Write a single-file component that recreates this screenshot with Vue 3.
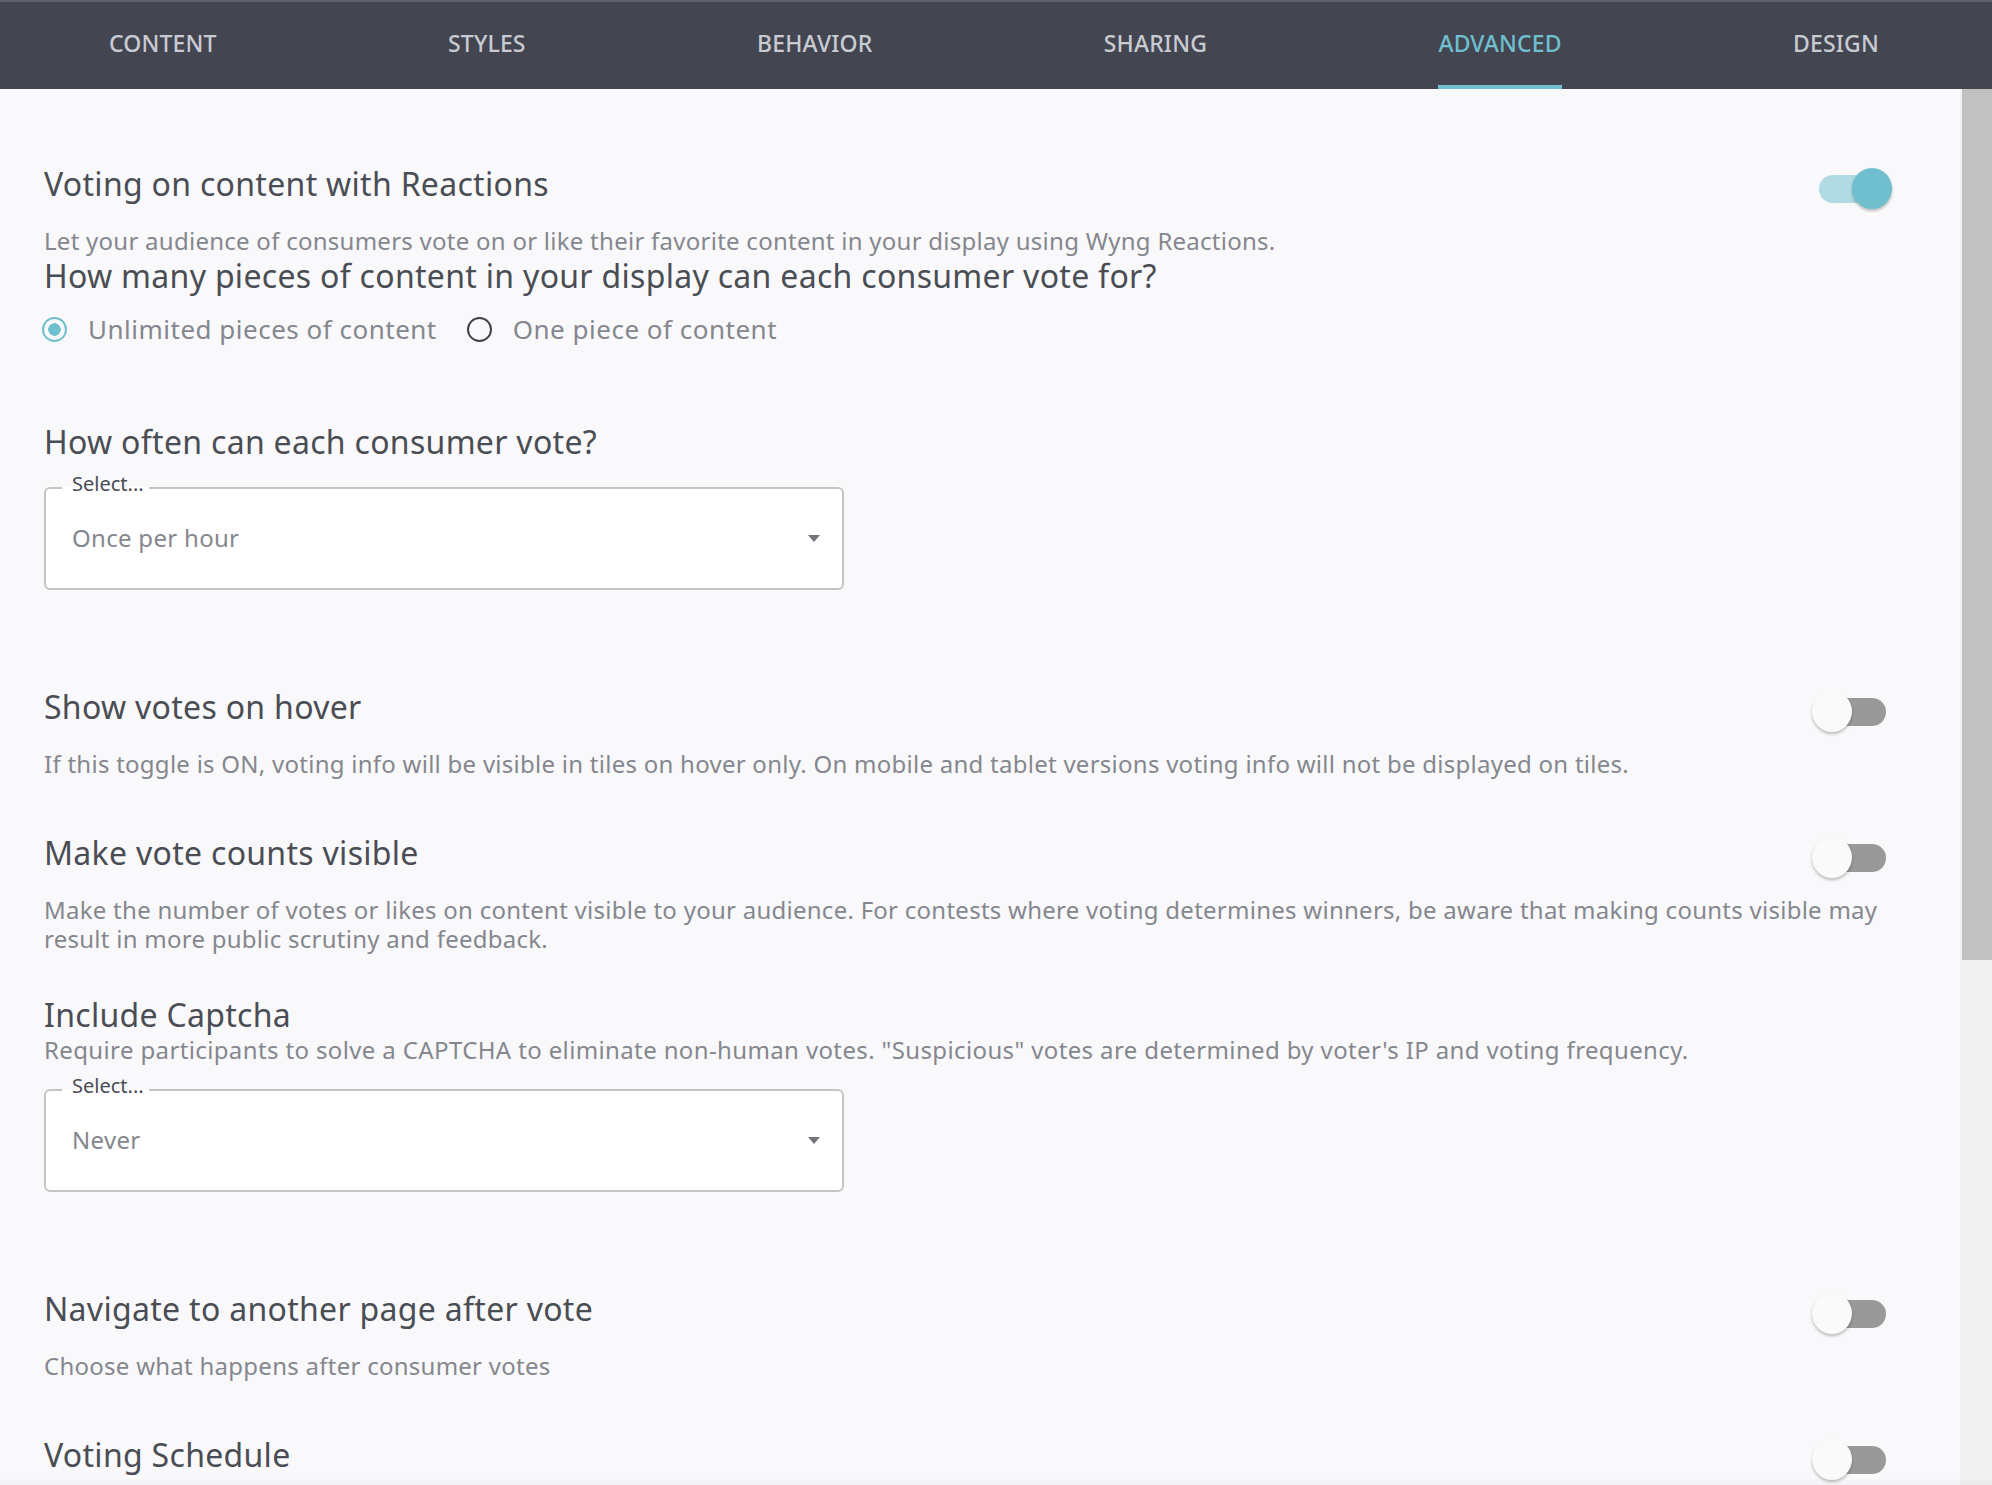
<template>
  <div class="page">
    <nav class="tabs">
      <a v-for="t in tabs" :key="t" class="tab" :class="{ active: t === active }" @click="active = t">{{ t }}</a>
    </nav>

    <div class="body">
      <main class="content">
        <section class="row first">
          <div class="head">
            <h2>Voting on content with Reactions</h2>
            <span class="toggle on"><i></i></span>
          </div>
          <p class="desc d-first">Let your audience of consumers vote on or like their favorite content in your display using Wyng Reactions.</p>
        </section>

        <h2 class="q-many">How many pieces of content in your display can each consumer vote for?</h2>
        <div class="radios">
          <label class="radio"><span class="dot checked"></span>Unlimited pieces of content</label>
          <label class="radio"><span class="dot"></span>One piece of content</label>
        </div>

        <h2 class="q-often">How often can each consumer vote?</h2>
        <fieldset class="select">
          <legend>Select...</legend>
          <span>Once per hour</span>
          <b class="caret"></b>
        </fieldset>

        <section class="row hover-row">
          <div class="head">
            <h2>Show votes on hover</h2>
            <span class="toggle"><i></i></span>
          </div>
          <p class="desc">If this toggle is ON, voting info will be visible in tiles on hover only. On mobile and tablet versions voting info will not be displayed on tiles.</p>
        </section>

        <section class="row counts-row">
          <div class="head">
            <h2>Make vote counts visible</h2>
            <span class="toggle"><i></i></span>
          </div>
          <p class="desc">Make the number of votes or likes on content visible to your audience. For contests where voting determines winners, be aware that making counts visible may result in more public scrutiny and feedback.</p>
        </section>

        <h2 class="q-captcha">Include Captcha</h2>
        <p class="desc d-captcha">Require participants to solve a CAPTCHA to eliminate non-human votes. "Suspicious" votes are determined by voter's IP and voting frequency.</p>
        <fieldset class="select">
          <legend>Select...</legend>
          <span>Never</span>
          <b class="caret"></b>
        </fieldset>

        <section class="row nav-row">
          <div class="head">
            <h2>Navigate to another page after vote</h2>
            <span class="toggle"><i></i></span>
          </div>
          <p class="desc">Choose what happens after consumer votes</p>
        </section>

        <section class="row schedule-row">
          <div class="head">
            <h2>Voting Schedule</h2>
            <span class="toggle"><i></i></span>
          </div>
        </section>
      </main>

      <div class="scrollbar"><div class="thumb"></div></div>
      <div class="fade"></div>
    </div>
  </div>
</template>

<script setup>
import { ref } from 'vue'

const tabs = ['CONTENT', 'STYLES', 'BEHAVIOR', 'SHARING', 'ADVANCED', 'DESIGN']
const active = ref('ADVANCED')
</script>

<style>
html, body { margin: 0; background: #f9f9fb; }
</style>

<style scoped>
.page {
  width: 1992px;
  height: 1485px;
  overflow: hidden;
  font-family: "Noto Sans", sans-serif;
  color: #4a4d54;
  background: #f9f9fb;
}
.tabs {
  height: 89px;
  box-sizing: border-box;
  border-top: 2px solid #5d616b;
  padding: 0 113px 0 109px;
  background: #434650;
  display: flex;
  justify-content: space-between;
}
.tab {
  font-size: 23px;
  font-weight: 500;
  line-height: 83px;
  letter-spacing: 0.15px;
  color: #c9cbd2;
  cursor: pointer;
}
.tab.active {
  color: #6fbfcf;
  box-shadow: inset 0 -4px 0 #6fbfcf;
}
.body {
  position: relative;
  display: flex;
  height: 1396px;
}
.content {
  flex: 1;
  padding: 0 0 0 44px;
  min-width: 0;
}
.scrollbar {
  width: 32px;
  background: #f1f1f1;
  display: flex;
  justify-content: flex-end;
}
.thumb {
  width: 30px;
  height: 871px;
  background: #c1c1c1;
}
.fade {
  position: absolute;
  left: 0;
  right: 0;
  bottom: 0;
  height: 8px;
  background: linear-gradient(rgba(0,0,0,0), rgba(0,0,0,0.03));
  pointer-events: none;
}
h2 {
  margin: 0;
  font-size: 32px;
  line-height: 40px;
  font-weight: 400;
  letter-spacing: 0.3px;
}
.head {
  display: flex;
  justify-content: space-between;
  align-items: center;
  padding-right: 74px;
}
.desc {
  margin: 0;
  font-size: 24px;
  line-height: 29px;
  letter-spacing: 0.26px;
  color: #85878e;
  width: 1860px;
}
.first { margin-top: 75px; }
.d-first { margin-top: 22px; }
.q-many { margin-top: 1px; }
.radios {
  display: flex;
  gap: 30px;
  margin-top: 15px;
  margin-left: -2px;
}
.radio {
  display: flex;
  align-items: center;
  gap: 21px;
  font-size: 26px;
  line-height: 36px;
  letter-spacing: 0.5px;
  color: #85878e;
}
.dot {
  box-sizing: border-box;
  width: 25px;
  height: 25px;
  border: 2.5px solid #3f424b;
  border-radius: 50%;
}
.dot.checked {
  border-color: #6fbfcf;
  background: radial-gradient(circle, #6fbfcf 0 6px, transparent 6.5px);
}
.q-often { margin-top: 75px; }
.select {
  position: relative;
  box-sizing: border-box;
  width: 800px;
  height: 117px;
  margin: 11px 0 0;
  padding: 0 26px 16px;
  border: 2px solid #c4c4c4;
  border-radius: 6px;
  background: #fff;
  font-size: 24px;
  letter-spacing: 0.3px;
  color: #85878e;
  display: flex;
  align-items: center;
}
.select legend {
  padding: 0 5px 8px 10px;
  margin-left: -10px;
  font-size: 20px;
  line-height: 22px;
  letter-spacing: 0;
  color: #4a4d54;
}
.caret {
  position: absolute;
  right: 22px;
  top: 32px;
  border: 6px solid transparent;
  border-top: 7px solid #75767b;
  border-bottom: 0;
}
.hover-row { margin-top: 97px; }
.hover-row .desc { margin-top: 22px; }
.counts-row { margin-top: 55px; }
.counts-row .desc { margin-top: 22px; }
.q-captcha { margin-top: 42px; }
.d-captcha { margin-top: 0; letter-spacing: 0.37px; }
.nav-row { margin-top: 97px; }
.nav-row .desc { margin-top: 22px; }
.schedule-row { margin-top: 55px; }
.toggle {
  position: relative;
  flex: none;
  width: 60px;
  height: 28px;
  margin-top: 10px;
  border-radius: 14px;
  background: #999;
}
.toggle i {
  position: absolute;
  top: -7px;
  left: -14px;
  width: 40px;
  height: 41px;
  border-radius: 50%;
  background: #fafafa;
  box-shadow: 0 2px 3px rgba(0,0,0,0.25);
}
.toggle.on {
  margin-right: 7px;
  background: #b0dbe3;
}
.toggle.on i {
  left: 33px;
  background: #6fbfcf;
}
</style>
